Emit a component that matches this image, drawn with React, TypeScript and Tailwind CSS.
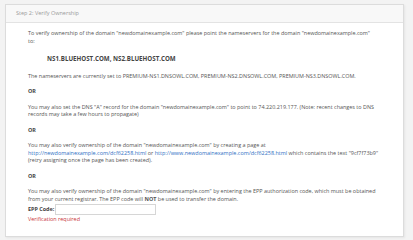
export default function App() {
  const para = 'mt-[7.6px]';
  return (
    <div
      className="w-[413px] h-[240px] bg-[#f3f3f3] pt-[4px] pl-[5px] text-[#555555] overflow-hidden"
      style={{ fontFamily: '"Open Sans", "Liberation Sans", sans-serif' }}
    >
      <div className="w-[399px] h-[233px] bg-white border border-[#dcdcdc] shadow-[1px_1px_2px_rgba(0,0,0,0.06)]">
        <div className="h-[18px] bg-[#f8f8f8] border-b border-[#e3e3e3] pl-[10px] flex items-center text-[5.5px] text-[#9a9a9a]">
          Step 2: Verify Ownership
        </div>
        <div className="px-[22px] pt-[7px] text-[5.45px] leading-[7.7px]">
          <p>
            To verify ownership of the domain "newdomainexample.com" please point the nameservers for the domain
            "newdomainexample.com"
            <br />
            to:
          </p>
          <p className="mt-[10px] pl-[19px] font-bold text-[6.2px] text-[#444444]">
            NS1.BLUEHOST.COM, NS2.BLUEHOST.COM
          </p>
          <p className="mt-[10px]">
            The nameservers are currently set to PREMIUM-NS1.DNSOWL.COM, PREMIUM-NS2.DNSOWL.COM, PREMIUM-NS3.DNSOWL.COM.
          </p>
          <p className={`${para} font-bold text-[#444444]`}>OR</p>
          <p className={para}>
            You may also set the DNS "A" record for the domain "newdomainexample.com" to point to 74.220.219.177. (Note:
            recent changes to DNS records may take a few hours to propagate)
          </p>
          <p className={`${para} font-bold text-[#444444]`}>OR</p>
          <p className={para}>
            You may also verify ownership of the domain "newdomainexample.com" by creating a page at{' '}
            <a className="text-[#2f6fc4]">http://newdomainexample.com/dcf62258.html</a> or{' '}
            <a className="text-[#2f6fc4]">http://www.newdomainexample.com/dcf62258.html</a> which contains the text
            "9cf7f73b9" (retry assigning once the page has been created).
          </p>
          <p className={`${para} font-bold text-[#444444]`}>OR</p>
          <p className={para}>
            You may also verify ownership of the domain "newdomainexample.com" by entering the EPP authorization code,
            which must be obtained from your current registrar. The EPP code will <b>NOT</b> be used to transfer the
            domain.
          </p>
          <div className="flex items-center mt-[1px]">
            <span className="font-bold text-[#444444]">EPP Code:</span>
            <input className="ml-[1px] w-[101px] h-[11px] border border-[#d6d6d6] bg-white outline-none" />
          </div>
          <p className="mt-[1px] text-[#c8353b]">Verification required</p>
        </div>
      </div>
    </div>
  );
}
